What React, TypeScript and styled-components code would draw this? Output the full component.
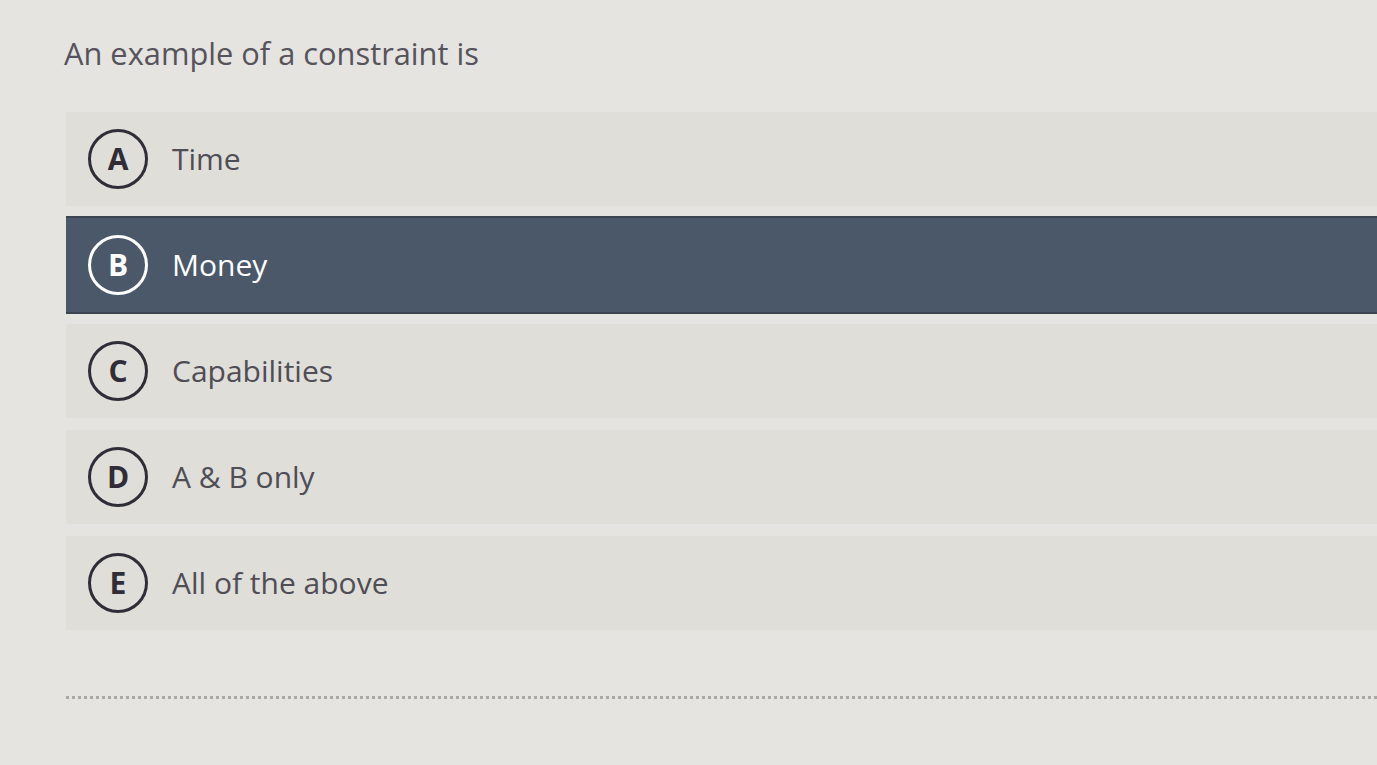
import React from "react";
import styled, { createGlobalStyle } from "styled-components";

const Global = createGlobalStyle`
  html, body {
    margin: 0;
    padding: 0;
    background: #e5e4e0;
  }
  body {
    font-family: "Open Sans", "Noto Sans", Arial, sans-serif;
    width: 1377px;
    height: 765px;
    overflow: hidden;
  }
`;

const Page = styled.div`
  display: flex;
  flex-direction: column;
  padding: 29px 0 0 0;
  height: 765px;
  box-sizing: border-box;
`;

const Question = styled.h1`
  margin: 0 0 0 64px;
  font-size: 30.8px;
  font-weight: 400;
  line-height: 48px;
  color: #55535b;
`;

const Choices = styled.ul`
  list-style: none;
  margin: 35px 0 0 66px;
  padding: 0;
  display: flex;
  flex-direction: column;
  gap: 12px;
`;

const Choice = styled.li<{ $selected?: boolean }>`
  height: 94px;
  display: flex;
  align-items: center;
  gap: 24px;
  padding-left: 22px;
  background: ${(p) => (p.$selected ? "#4b586a" : "#dfded9")};
  color: ${(p) => (p.$selected ? "#ffffff" : "#4f4d55")};
  box-shadow: ${(p) =>
    p.$selected ? "0 -2px 0 #3b4552, 0 2px 0 #3b4552" : "none"};
`;

const Badge = styled.span<{ $selected?: boolean }>`
  width: 54px;
  height: 54px;
  border-radius: 50%;
  border: 3px solid ${(p) => (p.$selected ? "#ffffff" : "#2f2e38")};
  display: flex;
  align-items: center;
  justify-content: center;
  font-size: 30px;
  font-weight: 700;
  line-height: 1;
  color: ${(p) => (p.$selected ? "#ffffff" : "#2f2e38")};
  flex-shrink: 0;
`;

const Label = styled.span<{ $selected?: boolean }>`
  font-size: 30px;
  line-height: 1;
  font-weight: ${(p) => (p.$selected ? 500 : 400)};
`;

const Divider = styled.div`
  margin: 66px 0 0 66px;
  height: 0;
  border-top: 3px dotted #a9a8a5;
`;

const options = [
  { key: "A", text: "Time" },
  { key: "B", text: "Money" },
  { key: "C", text: "Capabilities" },
  { key: "D", text: "A & B only" },
  { key: "E", text: "All of the above" },
];

export default function App() {
  const selected = "B";
  return (
    <>
      <Global />
      <Page>
        <Question>An example of a constraint is</Question>
        <Choices>
          {options.map((o) => {
            const isOn = o.key === selected;
            return (
              <Choice key={o.key} $selected={isOn}>
                <Badge $selected={isOn}>{o.key}</Badge>
                <Label $selected={isOn}>{o.text}</Label>
              </Choice>
            );
          })}
        </Choices>
        <Divider />
      </Page>
    </>
  );
}
